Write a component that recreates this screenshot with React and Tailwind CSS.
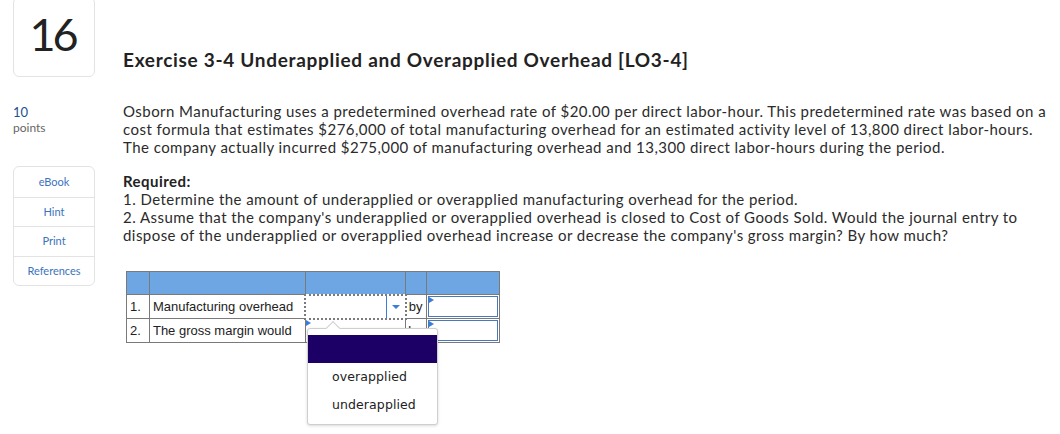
const sideLinks = ['eBook', 'Hint', 'Print', 'References'];

const intro = [
  'Osborn Manufacturing uses a predetermined overhead rate of $20.00 per direct labor-hour. This predetermined rate was based on a',
  'cost formula that estimates $276,000 of total manufacturing overhead for an estimated activity level of 13,800 direct labor-hours.',
  'The company actually incurred $275,000 of manufacturing overhead and 13,300 direct labor-hours during the period.',
];

const required = [
  '1. Determine the amount of underapplied or overapplied manufacturing overhead for the period.',
  "2. Assume that the company's underapplied or overapplied overhead is closed to Cost of Goods Sold. Would the journal entry to",
  "dispose of the underapplied or overapplied overhead increase or decrease the company's gross margin? By how much?",
];

function Flag() {
  return (
    <span className="absolute left-0 top-0 w-0 h-0 border-t-[3px] border-b-[3px] border-l-[5px] border-t-transparent border-b-transparent border-l-[#3b7dd8]" />
  );
}

function Sidebar() {
  return (
    <aside className="w-[82px] shrink-0 ml-[13px]">
      <div className="-mt-[3px] h-[80px] rounded-md border border-[#e3e3e3] flex items-center justify-center">
        <span className="text-[45px] leading-none tracking-[-3px] text-[#222] pr-[3px] pb-[6px]">16</span>
      </div>
      <div className="mt-[27px] text-[13px] leading-[16px] text-[#1d4f91]">10</div>
      <div className="text-[12px] leading-[16px] text-[#666]">points</div>
      <div className="mt-[30px] rounded-md border border-[#e3e3e3] text-[11px] text-[#3b74bd]">
        {sideLinks.map((l, i) => (
          <div
            key={l}
            className={`h-[29.5px] flex items-center justify-center ${i > 0 ? 'border-t border-[#e3e3e3]' : ''}`}
          >
            {l}
          </div>
        ))}
      </div>
    </aside>
  );
}

function AnswerTable() {
  const cell = 'border border-[#7a7a7a] h-[23px] p-0 relative';
  return (
    <div className="relative ml-[3px] mt-[27px] w-[374px] tracking-normal" style={{ fontFamily: '"Liberation Sans", Arial, sans-serif' }}>
      <table className="border-collapse table-fixed text-[13px] text-[#222]">
        <colgroup>
          <col className="w-[23px]" />
          <col className="w-[156px]" />
          <col className="w-[101px]" />
          <col className="w-[21px]" />
          <col className="w-[73px]" />
        </colgroup>
        <tbody>
          <tr className="bg-[#6ea6e4]">
            <td className={cell} />
            <td className={cell} />
            <td className={cell} />
            <td className={cell} />
            <td className={cell} />
          </tr>
          <tr>
            <td className={`${cell} pl-[3px]`}>1.</td>
            <td className={`${cell} pl-[3px]`}>Manufacturing overhead</td>
            <td className={`${cell} border-2 border-dotted border-[#3b7dd8]`}>
              <div className="flex h-full">
                <div className="flex-1" />
                <div className="w-[19px] border-l border-[#3b7dd8] flex items-center justify-center">
                  <span className="w-0 h-0 border-l-[4px] border-r-[4px] border-t-[4px] border-l-transparent border-r-transparent border-t-[#3b7dd8]" />
                </div>
              </div>
            </td>
            <td className={`${cell} pl-[2px]`}>by</td>
            <td className={`${cell} p-[1px]`}>
              <div className="relative h-[21px] border border-[#4a78b8]">
                <Flag />
              </div>
            </td>
          </tr>
          <tr>
            <td className={`${cell} pl-[3px]`}>2.</td>
            <td className={`${cell} pl-[3px]`}>The gross margin would</td>
            <td className={cell}>
              <Flag />
            </td>
            <td className={`${cell} pl-[2px]`}>by</td>
            <td className={`${cell} p-[1px]`}>
              <div className="relative h-[21px] border border-[#4a78b8]">
                <Flag />
              </div>
            </td>
          </tr>
        </tbody>
      </table>

      <div className="absolute left-[181px] top-[57px] w-[131px] h-[97px] bg-white border border-[#cfcfcf] rounded-[3px] shadow-[0_1px_3px_rgba(0,0,0,0.15)]">
        <span className="absolute -top-[6px] left-[20px] w-[10px] h-[10px] bg-white border-l border-t border-[#cfcfcf] rotate-45" />
        <div className="mt-[6px] h-[28px] bg-[#1c0066]" />
        <div className="pl-[24px] text-[12.5px] tracking-[0.1px] text-[#222]" style={{ fontFamily: '"DejaVu Sans", Verdana, sans-serif' }}>
          <div className="h-[28px] flex items-center">overapplied</div>
          <div className="h-[28px] flex items-center">underapplied</div>
        </div>
      </div>
    </div>
  );
}

export default function App() {
  return (
    <div className="w-[1060px] h-[434px] overflow-hidden bg-white flex" style={{ fontFamily: 'Lato, "Open Sans", sans-serif' }}>
      <Sidebar />
      <main className="ml-[28px] pt-[48px] text-[#2b2b2b]">
        <h1 className="text-[19px] leading-[24px] font-bold tracking-[0.7px] text-[#222] whitespace-nowrap">
          Exercise 3-4 Underapplied and Overapplied Overhead [LO3-4]
        </h1>
        <div className="mt-[30px] text-[15px] leading-[18px] tracking-[0.45px] whitespace-nowrap">
          {intro.map((l) => (
            <div key={l}>{l}</div>
          ))}
        </div>
        <div className="mt-[16px] text-[15px] leading-[18px] tracking-[0.45px] whitespace-nowrap">
          <div className="font-bold text-[#222]">Required:</div>
          {required.map((l) => (
            <div key={l}>{l}</div>
          ))}
        </div>
        <AnswerTable />
      </main>
    </div>
  );
}
